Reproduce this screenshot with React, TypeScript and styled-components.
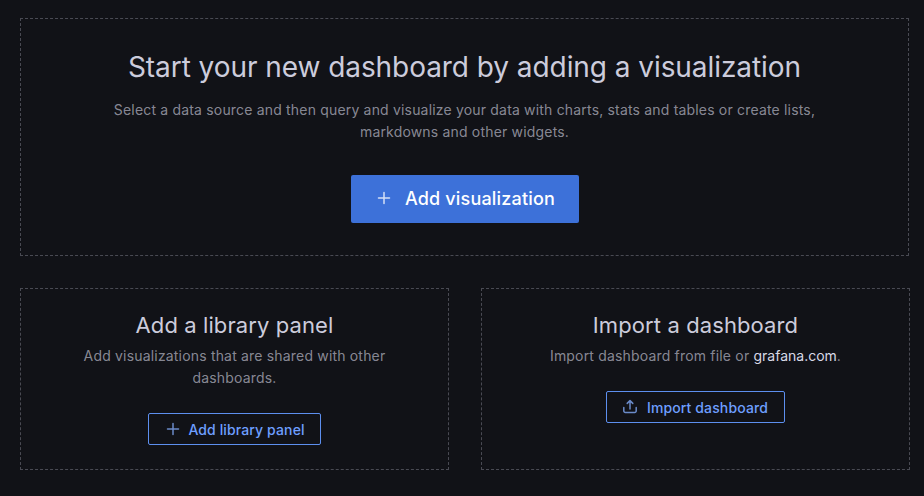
import { createGlobalStyle, styled } from 'styled-components';

const GlobalStyle = createGlobalStyle`
  html, body {
    margin: 0;
    background: #111217;
    font-family: Inter, "Liberation Sans", sans-serif;
    color: #ccccdc;
  }
`;

const Page = styled.div`
  width: 924px;
  height: 496px;
  box-sizing: border-box;
  padding: 18px 15px 0 20px;
  display: flex;
  flex-direction: column;
  gap: 32px;
  overflow: hidden;
`;

const DashedBox = styled.section<{ $height: number }>`
  height: ${(p) => p.$height}px;
  box-sizing: border-box;
  border: 1px dashed rgba(204, 204, 220, 0.3);
  display: flex;
  flex-direction: column;
  align-items: center;
  text-align: center;
`;

const HeroBox = styled(DashedBox)`
  padding: 32px 64px 0;
`;

const SmallBox = styled(DashedBox)`
  padding: 23px 48px 0;
`;

const Row = styled.div`
  display: grid;
  grid-template-columns: 429px 429px;
  gap: 32px;
`;

const HeroTitle = styled.h1`
  margin: 0 0 15px;
  font-size: 28px;
  line-height: 33px;
  font-weight: 400;
  letter-spacing: -0.06px;
  color: #ccccdc;
`;

const HeroText = styled.p`
  margin: 0 0 32px;
  font-size: 14px;
  line-height: 22px;
  letter-spacing: 0.18px;
  color: rgba(204, 204, 220, 0.65);
`;

const SmallTitle = styled.h2`
  margin: 0 0 7px;
  font-size: 22px;
  line-height: 26px;
  font-weight: 400;
  letter-spacing: 0.1px;
  color: #ccccdc;
`;

const SmallText = styled.p`
  margin: 0 0 24px;
  font-size: 14px;
  line-height: 22px;
  letter-spacing: 0.18px;
  color: rgba(204, 204, 220, 0.65);
`;

const PlainLink = styled.a`
  color: #d8d9e6;
  text-decoration: none;
  letter-spacing: 0;
`;

const PrimaryButton = styled.button`
  width: 228px;
  height: 48px;
  display: flex;
  align-items: center;
  justify-content: center;
  gap: 13px;
  padding: 0 0 2px 2px;
  border: none;
  border-radius: 2px;
  background: #3d71d9;
  color: #ffffff;
  font-family: inherit;
  font-size: 18px;
  font-weight: 500;
  letter-spacing: 0.18px;
`;

const OutlineButton = styled.button`
  height: 32px;
  box-sizing: border-box;
  display: flex;
  align-items: center;
  gap: 7px;
  padding: 0 15px 0 16px;
  border: 1px solid #5d8fef;
  border-radius: 2px;
  background: transparent;
  color: #6e9fff;
  font-family: inherit;
  font-size: 14px;
  font-weight: 500;
  letter-spacing: 0.12px;
`;

const ImportButton = styled(OutlineButton)`
  gap: 8px;
  padding: 0 16px;
`;

const IconSlot = styled.svg<{ $color: string }>`
  width: 16px;
  height: 16px;
  flex: none;
  fill: none;
  stroke: ${(p) => p.$color};
  stroke-width: 1.5;
  stroke-linecap: round;
  stroke-linejoin: round;
`;

function PlusIcon({ color }: { color: string }) {
  return (
    <IconSlot viewBox="0 0 16 16" $color={color}>
      <path d="M8 2.5v11M2.5 8h11" />
    </IconSlot>
  );
}

function UploadIcon({ color }: { color: string }) {
  return (
    <IconSlot viewBox="0 0 16 16" $color={color}>
      <path d="M7 10V1.7M4.2 4.4 7 1.6 9.8 4.4M0.8 8.5v3.5a1.5 1.5 0 0 0 1.5 1.5h9.4a1.5 1.5 0 0 0 1.5-1.5V8.5" />
    </IconSlot>
  );
}

export default function App() {
  return (
    <Page>
      <GlobalStyle />
      <HeroBox $height={238}>
        <HeroTitle>Start your new dashboard by adding a visualization</HeroTitle>
        <HeroText>
          Select a data source and then query and visualize your data with charts, stats and tables or create lists,
          markdowns and other widgets.
        </HeroText>
        <PrimaryButton>
          <PlusIcon color="#d5e0f6" />
          Add visualization
        </PrimaryButton>
      </HeroBox>
      <Row>
        <SmallBox $height={182}>
          <SmallTitle>Add a library panel</SmallTitle>
          <SmallText>Add visualizations that are shared with other dashboards.</SmallText>
          <OutlineButton>
            <PlusIcon color="#6b8bc9" />
            Add library panel
          </OutlineButton>
        </SmallBox>
        <SmallBox $height={182}>
          <SmallTitle>Import a dashboard</SmallTitle>
          <SmallText>
            Import dashboard from file or <PlainLink href="#">grafana.com</PlainLink>.
          </SmallText>
          <ImportButton>
            <UploadIcon color="#6b8bc9" />
            Import dashboard
          </ImportButton>
        </SmallBox>
      </Row>
    </Page>
  );
}
